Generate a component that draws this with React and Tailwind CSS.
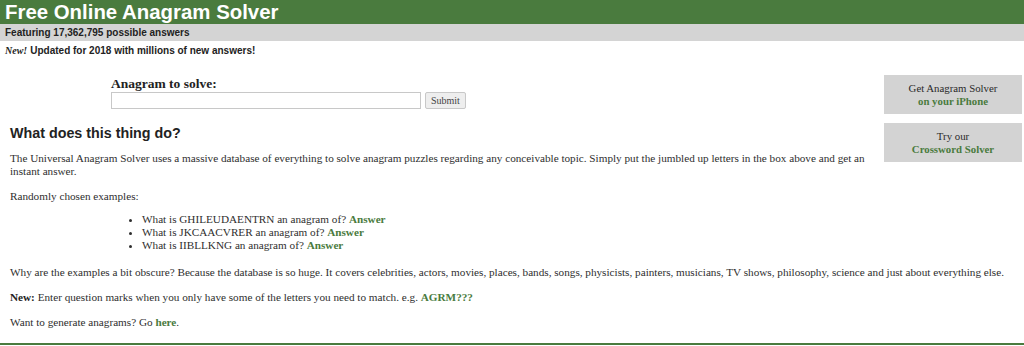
export default function App() {
  const serif = { fontFamily: '"Liberation Serif", "Times New Roman", serif' };
  return (
    <div className="w-[1024px] h-[346px] overflow-hidden bg-white text-[#222]" style={{ fontFamily: '"Liberation Sans", Arial, sans-serif' }}>
      <div className="h-[24px] bg-[#4a7b3e] px-[5px] flex items-center">
        <h1 className="text-white font-bold text-[20.4px] leading-none">Free Online Anagram Solver</h1>
      </div>
      <div className="h-[17px] bg-[#d4d4d4] px-[5px] flex items-center">
        <span className="font-bold text-[10px] text-[#222]">Featuring 17,362,795 possible answers</span>
      </div>
      <div className="h-[18px] px-[5px] flex items-center text-[10px] font-bold">
        <span className="italic mr-[3px]" style={serif}>New!</span>
        <span>Updated for 2018 with millions of new answers!</span>
      </div>

      <div className="relative">
        <div className="float-right w-[138px] mr-[2px] mt-[16px] ml-[18px] flex flex-col gap-[9px] text-[10.8px] leading-[12.5px]" style={serif}>
          <div className="h-[39px] bg-[#d3d3d3] flex flex-col items-center justify-center">
            <span className="text-[#2a2a2a]">Get Anagram Solver</span>
            <span className="text-[#4a7b3e] font-bold">on your iPhone</span>
          </div>
          <div className="h-[39px] bg-[#d3d3d3] flex flex-col items-center justify-center">
            <span className="text-[#2a2a2a]">Try our</span>
            <span className="text-[#4a7b3e] font-bold">Crossword Solver</span>
          </div>
        </div>

        <div className="pt-[17px] pl-[111px]" style={serif}>
          <div className="font-bold text-[13.5px] leading-[15px] text-[#222]">Anagram to solve:</div>
          <div className="flex items-center gap-[4px] mt-[1px]">
            <input className="w-[310px] h-[17px] border border-[#c8c8c8] bg-white outline-none" />
            <button className="h-[17px] px-[5px] border border-[#c8c8c8] bg-[#eeeeee] text-[10px] text-[#444] rounded-[2px]">Submit</button>
          </div>
        </div>

        <div className="px-[10px] text-[11.2px] leading-[12.5px] text-[#2e2e2e]" style={serif}>
          <h2 className="font-bold text-[14.3px] mt-[15px] leading-[18px] text-[#222]" style={{ fontFamily: '"Liberation Sans", Arial, sans-serif' }}>What does this thing do?</h2>
          <p className="mt-[10px]">The Universal Anagram Solver uses a massive database of everything to solve anagram puzzles regarding any conceivable topic. Simply put the jumbled up letters in the box above and get an instant answer.</p>
          <p className="mt-[13px]">Randomly chosen examples:</p>
          <ul className="list-disc ml-[132px] mt-[10px] leading-[13px]">
            <li>What is GHILEUDAENTRN an anagram of? <span className="text-[#4a7b3e] font-bold">Answer</span></li>
            <li>What is JKCAACVRER an anagram of? <span className="text-[#4a7b3e] font-bold">Answer</span></li>
            <li>What is IIBLLKNG an anagram of? <span className="text-[#4a7b3e] font-bold">Answer</span></li>
          </ul>
          <p className="mt-[14px]">Why are the examples a bit obscure? Because the database is so huge. It covers celebrities, actors, movies, places, bands, songs, physicists, painters, musicians, TV shows, philosophy, science and just about everything else.</p>
          <p className="mt-[13px]"><b className="text-[#222]">New:</b> Enter question marks when you only have some of the letters you need to match. e.g. <span className="text-[#4a7b3e] font-bold">AGRM???</span></p>
          <p className="mt-[12px]">Want to generate anagrams? Go <span className="text-[#4a7b3e] font-bold">here</span>.</p>
        </div>
        <div className="mt-[15px] h-[2px] bg-[#4a7b3e]"></div>
      </div>
    </div>
  );
}
